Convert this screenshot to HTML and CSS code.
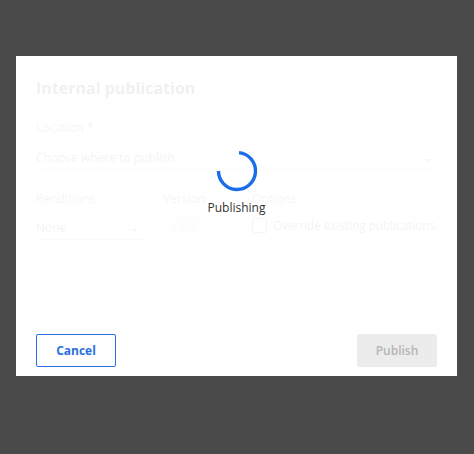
FILE: index.html
```html
<!DOCTYPE html>
<html>
<head>
<meta charset="utf-8">
<link rel="stylesheet" href="styles.css">
</head>
<body>
<div class="dialog">
  <div class="form">
    <h1 class="title">Internal publication</h1>
    <div class="label loc">Location *</div>
    <div class="select wide"><span>Choose where to publish</span><span class="caret"></span></div>
    <div class="row">
      <div class="col c1">
        <div class="label">Renditions</div>
        <div class="select narrow"><span>None</span><span class="caret"></span></div>
      </div>
      <div class="col c2">
        <div class="label">Version</div>
        <div class="version">v 2.0</div>
      </div>
      <div class="col c3">
        <div class="label">Options</div>
        <label class="check"><span class="box"></span>Override existing publications.</label>
      </div>
    </div>
    <div class="actions">
      <button class="btn cancel">Cancel</button>
      <button class="btn publish">Publish</button>
    </div>
  </div>
  <div class="overlay">
    <svg class="spinner" width="44" height="44" viewBox="0 0 44 44">
      <path d="M24 3.6 A18.5 18.5 0 1 1 3.5 22" fill="none" stroke="#1a6ee8" stroke-width="3.4" stroke-linecap="butt"/>
    </svg>
    <div class="busy">Publishing</div>
  </div>
</div>
</body>
</html>
```
FILE: styles.css
```css
html, body {
  margin: 0;
  padding: 0;
  background: #4a4a4a;
  font-family: "Open Sans", "Noto Sans", sans-serif;
}
body {
  width: 474px;
  height: 454px;
  padding: 56px 0 0 16px;
  box-sizing: border-box;
}
.dialog {
  position: relative;
  width: 441px;
  height: 320px;
  background: #fff;
}
.form {
  padding: 19px 20px 0 20px;
  height: 100%;
  box-sizing: border-box;
  display: flex;
  flex-direction: column;
}
.title {
  margin: 0 0 18px 0;
  font-size: 16px;
  font-weight: 700;
  color: #333;
  line-height: 26px;
}
.label {
  font-size: 12px;
  color: #666;
  line-height: 18px;
  margin-bottom: 8px;
}
.label.loc { margin-bottom: 9px; }
.select {
  display: flex;
  justify-content: space-between;
  align-items: center;
  border-bottom: 1px solid #bbb;
  font-size: 12px;
  color: #555;
  line-height: 18px;
  padding: 3px 0 2px;
}
.select.wide { margin-bottom: 20px; }
.select.narrow { width: 107px; }
.caret {
  width: 0;
  height: 0;
  border-left: 3px solid transparent;
  border-right: 3px solid transparent;
  border-top: 3px solid #777;
  margin-right: 5px;
  margin-top: 4px;
}
.row {
  display: flex;
}
.c1 { width: 127px; flex: none; }
.c2 { width: 89px; flex: none; }
.c3 { flex: 1; min-width: 0; }
.version {
  width: 55px;
  height: 19px;
  background: #eee;
  font-size: 11px;
  color: #999;
  line-height: 19px;
  padding-left: 8px;
  box-sizing: border-box;
  margin-top: 1px;
}
.check {
  display: flex;
  align-items: center;
  font-size: 11.7px;
  color: #555;
  line-height: 18px;
  margin-top: 3px;
  white-space: nowrap;
}
.box {
  width: 13px;
  height: 13px;
  border: 1px solid #777;
  border-radius: 2px;
  margin-right: 6px;
  flex: none;
}
.actions {
  margin-top: auto;
  margin-bottom: 9px;
  display: flex;
  justify-content: space-between;
}
.btn {
  font-family: inherit;
  font-size: 12px;
  height: 33px;
  width: 80px;
  border-radius: 2px;
}
.cancel {
  background: #fff;
  border: 1px solid #2a6fe0;
  color: #2a6fe0;
  font-weight: 700;
}
.publish {
  background: #ececec;
  border: 0;
  color: #b5b5b5;
  font-weight: 600;
}
.overlay {
  position: absolute;
  left: 0;
  top: 0;
  right: 0;
  height: 260px;
  background: rgba(255, 255, 255, 0.93);
  display: flex;
  flex-direction: column;
  align-items: center;
  padding-top: 93px;
  box-sizing: border-box;
}
.spinner {
  display: block;
  margin-left: 1px;
}
.busy {
  font-size: 12px;
  color: #333;
  line-height: 18px;
  margin-top: 6px;
}
```
